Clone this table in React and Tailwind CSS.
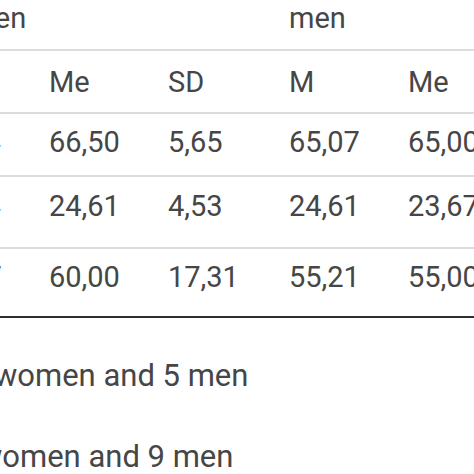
export default function App() {
  const rows = [
    { v: ["65,54", "66,50", "5,65", "65,07", "65,00"], pt: "pt-[12px]", h: "h-[63px]", c: "ml-[-3px]" },
    { v: ["24,94", "24,61", "4,53", "24,61", "23,67"], pt: "pt-[13px]", h: "h-[72px]", c: "ml-[-3px]" },
    { v: ["55,17", "60,00", "17,31", "55,21", "55,00"], pt: "pt-[12px]", h: "h-[69px]", c: "ml-[-2px]" },
  ];
  return (
    <div
      className="w-[474px] h-[474px] overflow-hidden bg-white text-[#464646] text-[29px] leading-[32px]"
      style={{ fontFamily: "Roboto, 'Noto Sans', sans-serif" }}
    >
      <div className="ml-[-67px] w-[620px]">
        <div className="grid grid-cols-[116px_240px_264px] h-[51px] pt-[2px] border-b-2 border-[#dcdcdc]">
          <div className="col-span-2 ml-[-2px]">women</div>
          <div>men</div>
        </div>
        <div className="grid grid-cols-[116px_119px_121px_119px_145px] h-[63px] pt-[15px] border-b-2 border-[#dcdcdc]">
          <div className="ml-[-6px]">M</div>
          <div>Me</div>
          <div>SD</div>
          <div>M</div>
          <div>Me</div>
        </div>
        {rows.map((r, i) => (
          <div
            key={i}
            className={`grid grid-cols-[116px_119px_121px_119px_145px] ${r.h} ${r.pt} ${
              i < 2 ? "border-b-2 border-[#dcdcdc]" : "border-b-2 border-[#2f2f2f]"
            }`}
          >
            {r.v.map((t, j) => (
              <div key={j} className={j === 0 ? `whitespace-nowrap ${r.c}` : "whitespace-nowrap"}>
                {t}
              </div>
            ))}
          </div>
        ))}
        <div className="text-[31px] leading-[34px] pt-[41px] ml-[61px] whitespace-nowrap">women and 5 men</div>
        <div className="text-[31px] leading-[34px] pt-[47px] ml-[46px] whitespace-nowrap">women and 9 men</div>
      </div>
    </div>
  );
}
